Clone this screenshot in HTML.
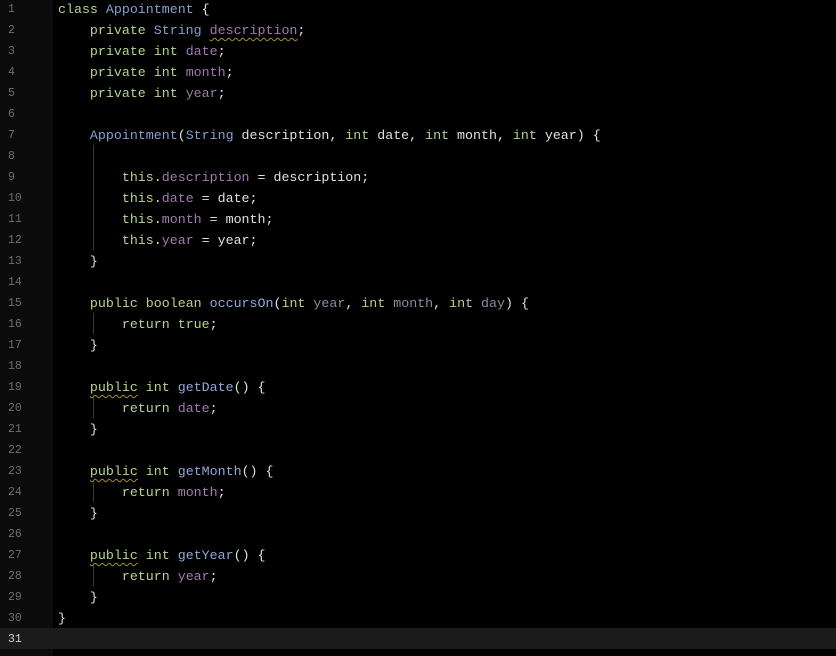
<!DOCTYPE html>
<html><head><style>
html,body{margin:0;padding:0;background:#000;width:836px;height:656px;overflow:hidden}
#g{position:absolute;left:0;top:0;width:53px;height:656px;background:#0b0b0b}
#hl{position:absolute;left:0;top:628px;width:836px;height:21px;background:#1b1b1b}
#nums{position:absolute;left:8px;top:-1px;font:11.5px/21px "Liberation Mono",monospace;color:#6e6e6e}
#nums div.a{color:#cfcfcf}
#code{position:absolute;left:58px;top:-1px;font:13.3px/21px "Liberation Mono",monospace;color:#e0e0e0;white-space:pre}
.k{color:#b8d48c}.t{color:#84a0d0}.f{color:#a07aae}.p{color:#8c8aa4}.m{color:#8ea8d8}
.w{text-decoration:underline wavy #a09030 1px;text-underline-offset:3px}
.ig{position:absolute;left:93px;width:1px;background:#3a3a3a}
</style></head><body>
<div id="g"></div><div id="hl"></div>
<div class="ig" style="top:145px;height:105px"></div>
<div class="ig" style="top:313px;height:21px"></div>
<div class="ig" style="top:397px;height:21px"></div>
<div class="ig" style="top:481px;height:21px"></div>
<div class="ig" style="top:565px;height:21px"></div>
<div id="nums"><div>1</div><div>2</div><div>3</div><div>4</div><div>5</div><div>6</div><div>7</div><div>8</div><div>9</div><div>10</div><div>11</div><div>12</div><div>13</div><div>14</div><div>15</div><div>16</div><div>17</div><div>18</div><div>19</div><div>20</div><div>21</div><div>22</div><div>23</div><div>24</div><div>25</div><div>26</div><div>27</div><div>28</div><div>29</div><div>30</div><div class="a">31</div></div>
<div id="code"><span class="k">class</span> <span class="t">Appointment</span> {
    <span class="k">private</span> <span class="t">String</span> <span class="f w">description</span>;
    <span class="k">private</span> <span class="k">int</span> <span class="f">date</span>;
    <span class="k">private</span> <span class="k">int</span> <span class="f">month</span>;
    <span class="k">private</span> <span class="k">int</span> <span class="f">year</span>;

    <span class="t">Appointment</span>(<span class="t">String</span> description, <span class="k">int</span> date, <span class="k">int</span> month, <span class="k">int</span> year) {

        <span class="k">this</span>.<span class="f">description</span> = description;
        <span class="k">this</span>.<span class="f">date</span> = date;
        <span class="k">this</span>.<span class="f">month</span> = month;
        <span class="k">this</span>.<span class="f">year</span> = year;
    }

    <span class="k">public</span> <span class="k">boolean</span> <span class="m">occursOn</span>(<span class="k">int</span> <span class="p">year</span>, <span class="k">int</span> <span class="p">month</span>, <span class="k">int</span> <span class="p">day</span>) {
        <span class="k">return</span> <span class="k">true</span>;
    }

    <span class="k w">public</span> <span class="k">int</span> <span class="m">getDate</span>() {
        <span class="k">return</span> <span class="f">date</span>;
    }

    <span class="k w">public</span> <span class="k">int</span> <span class="m">getMonth</span>() {
        <span class="k">return</span> <span class="f">month</span>;
    }

    <span class="k w">public</span> <span class="k">int</span> <span class="m">getYear</span>() {
        <span class="k">return</span> <span class="f">year</span>;
    }
}
</div>
</body></html>
